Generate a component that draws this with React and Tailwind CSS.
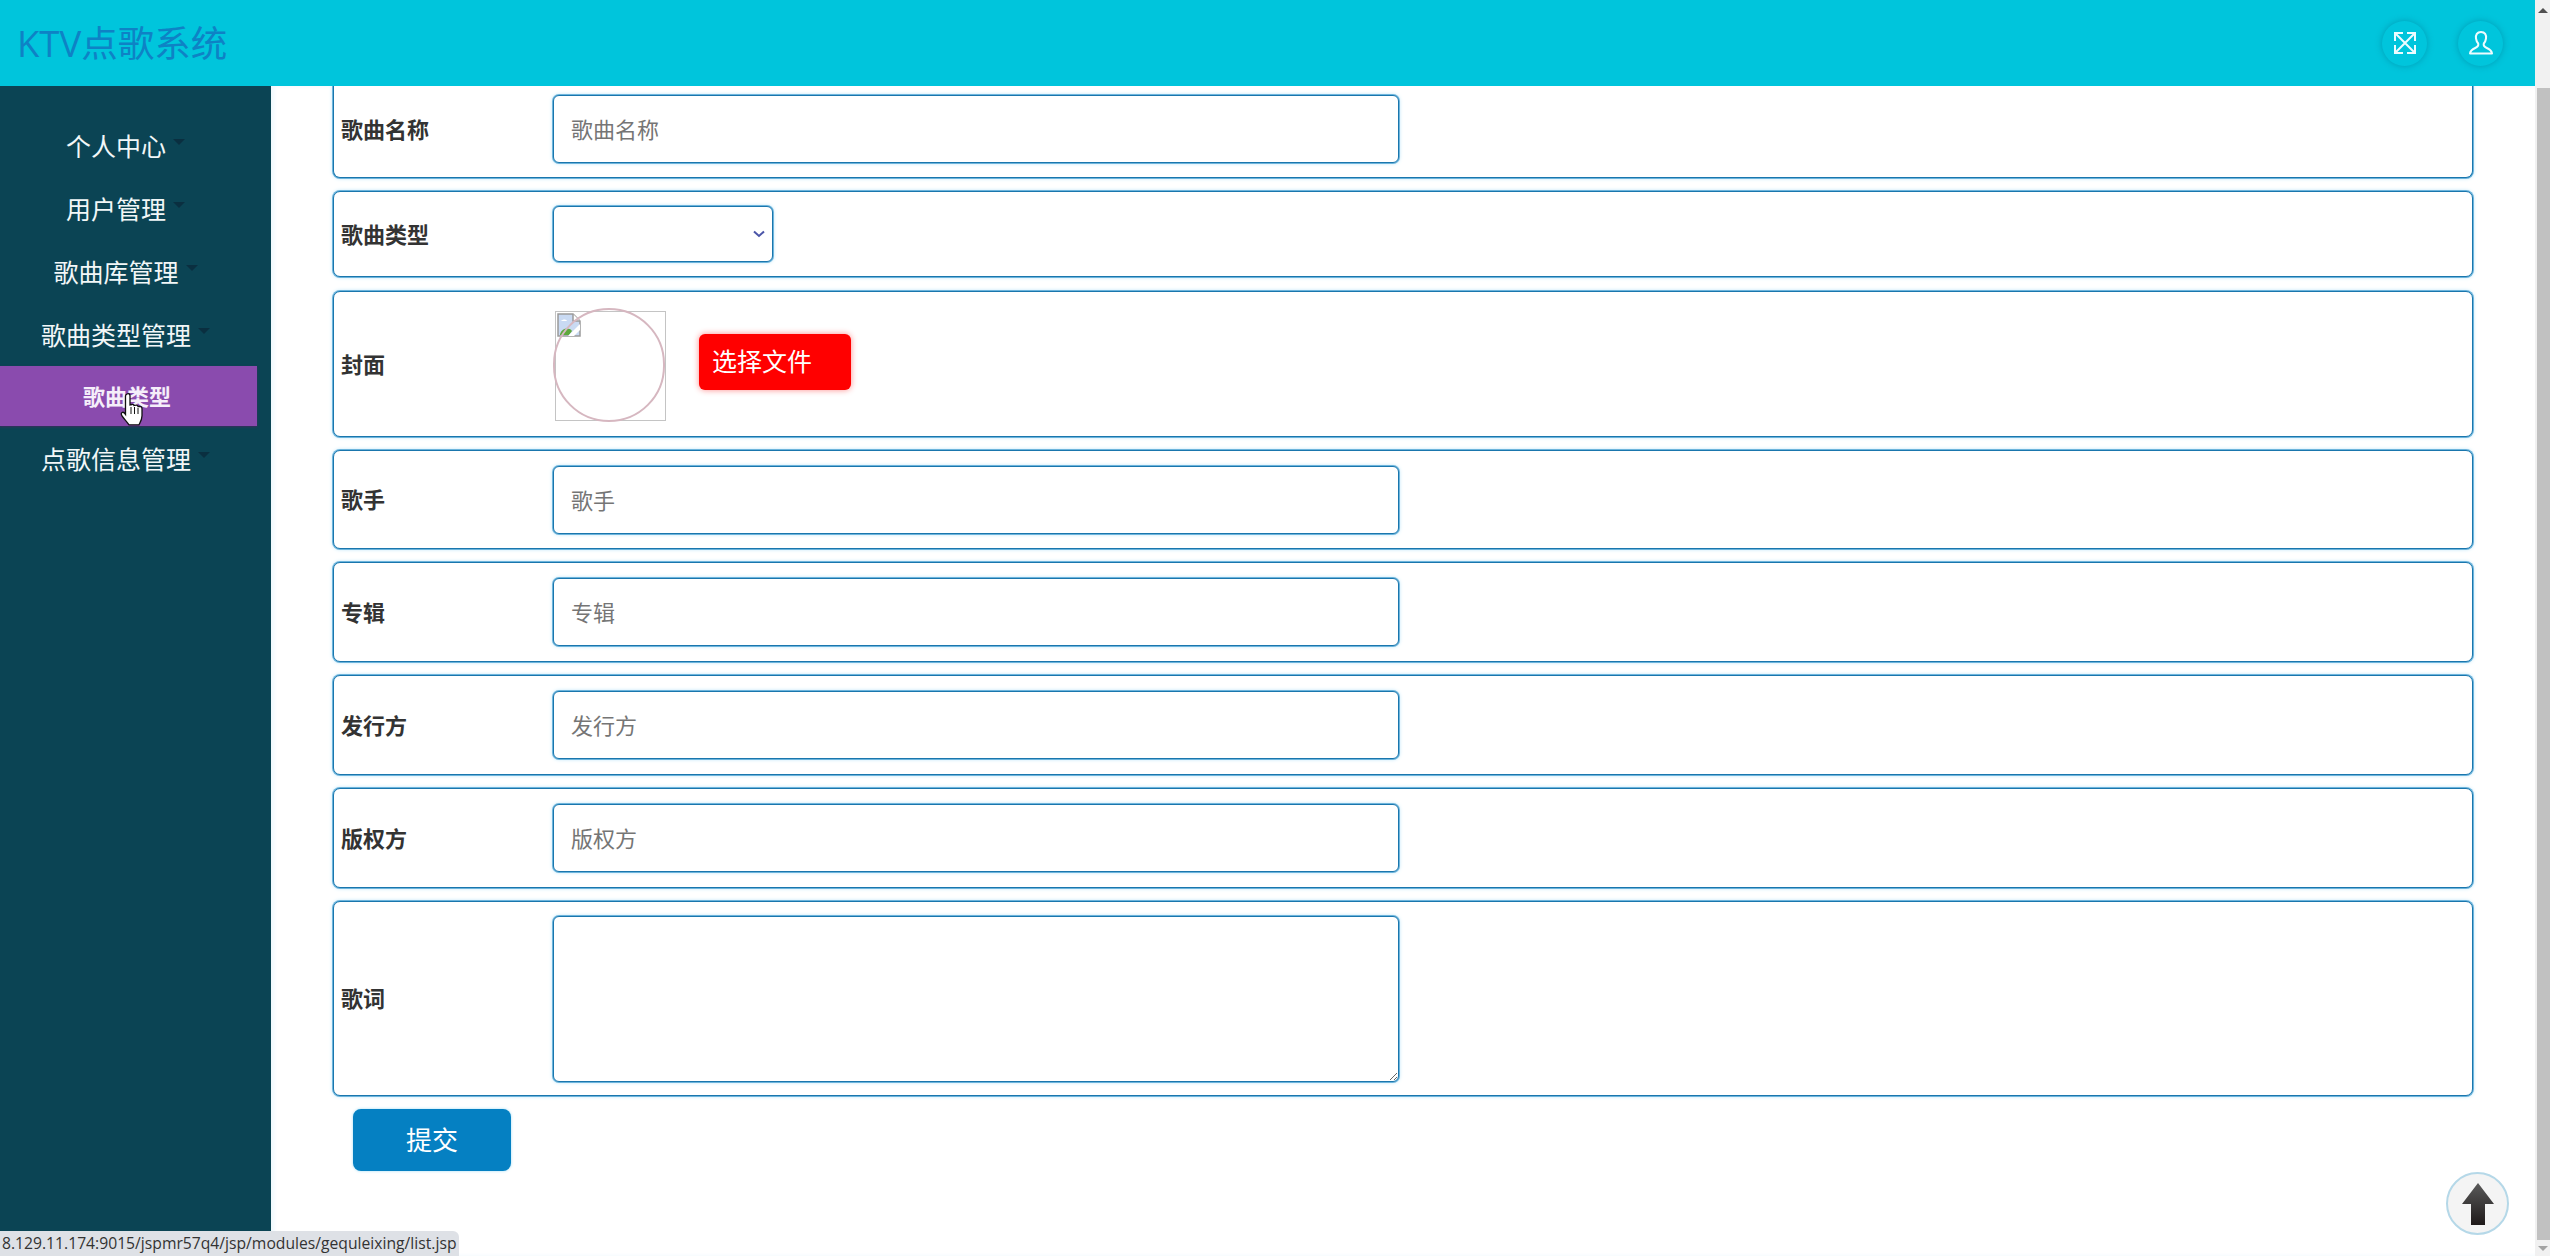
const font = "font-['Open_Sans','Noto_Sans_CJK_SC',sans-serif]"

const menu = ['个人中心', '用户管理', '歌曲库管理', '歌曲类型管理']

function MenuItem({ label }) {
  return (
    <div className="h-[63px] w-[251px] flex items-center justify-center text-[25px] text-[#f2f7f8]">
      <span>{label}</span>
      <span className="ml-[7px] mb-[9px] w-0 h-0 border-x-[6px] border-x-transparent border-t-[6px] border-t-[#0a2f40]" />
    </div>
  )
}

function Row({ label, className, children }) {
  return (
    <div className={`flex items-center pl-[7px] bg-white border border-[#1a76ad] rounded-[7px] shadow-[0_0_0_1px_#6db5dc,0_0_4px_#a8dcf5] ${className}`}>
      <div className="w-[212px] text-[22px] font-bold text-[#333]">{label}</div>
      {children}
    </div>
  )
}

function TextInput({ placeholder }) {
  return (
    <input
      placeholder={placeholder}
      className="w-[846px] h-[68px] px-[17px] text-[22px] bg-white border border-[#1a76ad] rounded-[6px] shadow-[0_0_0_1px_#6db5dc,0_0_4px_#a8dcf5] outline-none placeholder:text-[#757575]"
    />
  )
}

function BrokenImage() {
  return (
    <svg width="24" height="24" viewBox="0 0 24 24">
      <path d="M1 1h15l7 7v15H1z" fill="#c9daf3" stroke="#9a9a9a" strokeWidth="1.5" />
      <path d="M16 1v7h7" fill="#fff" stroke="#9a9a9a" strokeWidth="1.5" />
      <path d="M3 21c2-6 9-7 12-3l-3 4H3z" fill="#5fa83d" />
      <path d="M4 8c2-2 5-2 6 0z" fill="#fff" />
      <path d="M11 23 23 11v6l-6 6z" fill="#fff" />
    </svg>
  )
}

export default function App() {
  return (
    <div className={`relative flex h-[1256px] w-full overflow-hidden bg-white ${font}`}>
      <div className="flex-1 flex flex-col min-w-0">
        <header className="h-[86px] shrink-0 bg-[#00c5dc] flex items-center pl-[17px] pr-[32px] z-10">
          <div className="text-[36.5px] text-[#0e82c5] flex-1">KTV点歌系统</div>
          <div className="flex items-center gap-[31px]">
            <div className="w-[45px] h-[45px] rounded-full bg-[#00c5dc] shadow-[0_0_7px_#009db6] flex items-center justify-center">
              <svg width="24" height="24" viewBox="0 0 24 24" fill="none" stroke="#eefcff" strokeWidth="2">
                <path d="M3 3 21 21M21 3 3 21" />
                <path d="M2 9V2h7M15 2h7v7M22 15v7h-7M9 22H2v-7" strokeWidth="2" strokeLinecap="square" />
              </svg>
            </div>
            <div className="w-[45px] h-[45px] rounded-full bg-[#00c5dc] shadow-[0_0_7px_#009db6] flex items-center justify-center">
              <svg width="26" height="26" viewBox="0 0 26 26" fill="none" stroke="#eefcff" strokeWidth="2" strokeLinejoin="round">
                <path d="M13 2c-4 0-5.500 3-5 6.500.3 2.200 1.200 3.800 2.200 5 .6 2-.2 3.200-3 4.500-2.500 1.100-4.700 2.300-5.200 5.500h22c-.5-3.200-2.700-4.400-5.200-5.500-2.800-1.300-3.600-2.500-3-4.500 1-1.200 1.900-2.800 2.200-5C18.500 5 17 2 13 2z" />
              </svg>
            </div>
          </div>
        </header>

        <div className="flex-1 flex min-h-0">
          <aside className="w-[271px] shrink-0 bg-[#0b4454] pt-[29px]">
            {menu.map((m) => <MenuItem key={m} label={m} />)}
            <div className="-mt-[1px] h-[60px] w-[257px] bg-[#8a4bae] flex items-center justify-center pr-[3px] pt-[1px] text-[22px] font-bold text-[#f5eefa] shadow-[0_1px_2px_#3b2d5e]">
              歌曲类型
            </div>
            <div className="mt-[2px]"><MenuItem label="点歌信息管理" /></div>
          </aside>

          <main className="flex-1 pl-[62px] pr-[62px] flex flex-col gap-[13px] shadow-[inset_3px_0_4px_#eef8fd]">
            <Row label="歌曲名称" className="h-[92px] pb-[5px] !border-t-0 !rounded-t-none">
              <TextInput placeholder="歌曲名称" />
            </Row>
            <Row label="歌曲类型" className="h-[86px]">
              <div className="relative">
                <select className="w-[220px] h-[56px] appearance-none bg-white border border-[#1a76ad] rounded-[6px] shadow-[0_0_0_1px_#6db5dc,0_0_4px_#a8dcf5] outline-none" />
                <svg className="absolute right-[8px] top-[24px]" width="12" height="8" viewBox="0 0 12 8" fill="none" stroke="#4b55a8" strokeWidth="2">
                  <path d="M1 1.500 6 6l5-4.500" />
                </svg>
              </div>
            </Row>
            <Row label="封面" className="mt-[1px] h-[146px]">
              <div className="flex items-center">
                <div className="relative ml-[2px] mt-[4px] w-[111px] h-[110px] border border-[#c4c4c4]">
                  <div className="absolute left-[1px] top-[1px]"><BrokenImage /></div>
                  <div className="absolute -left-[3px] -top-[4px] w-[112px] h-[114px] rounded-full border-2 border-[#d6b7c0]" />
                </div>
                <div className="ml-[33px] mb-[4px] w-[152px] h-[56px] pl-[13px] flex items-center bg-[#ff0000] rounded-[6px] shadow-[0_0_6px_#ff8c8c] text-[25px] text-white">
                  选择文件
                </div>
              </div>
            </Row>
            <Row label="歌手" className="h-[99px]"><TextInput placeholder="歌手" /></Row>
            <Row label="专辑" className="h-[100px]"><TextInput placeholder="专辑" /></Row>
            <Row label="发行方" className="h-[100px]"><TextInput placeholder="发行方" /></Row>
            <Row label="版权方" className="h-[100px]"><TextInput placeholder="版权方" /></Row>
            <Row label="歌词" className="h-[195px]">
              <textarea className="block w-[846px] h-[166px] bg-white border border-[#1a76ad] rounded-[6px] shadow-[0_0_0_1px_#6db5dc,0_0_4px_#a8dcf5] outline-none" />
            </Row>
            <button className="ml-[20px] w-[158px] h-[62px] bg-[#0580c2] rounded-[8px] shadow-[0_0_3px_#9fdcf5] text-[26px] text-white">
              提交
            </button>
          </main>
        </div>
      </div>

      {/* window scrollbar */}
      <div className="w-[15px] shrink-0 bg-[#f1f1f1] flex flex-col items-end">
        <div className="w-full h-[88px] flex justify-center pt-[8px]">
          <span className="w-0 h-0 border-x-[5px] border-x-transparent border-b-[5px] border-b-[#505050]" />
        </div>
        <div className="w-[13px] h-[1152px] bg-[#c1c1c1]" />
        <div className="w-full flex-1 flex justify-center items-center">
          <span className="w-0 h-0 border-x-[5px] border-x-transparent border-t-[5px] border-t-[#a3a3a3]" />
        </div>
      </div>

      {/* back to top */}
      <div className="absolute left-[2446px] top-[1172px] w-[63px] h-[63px] rounded-full bg-[#f4f4f4] border-2 border-[#b5d8e8] flex items-center justify-center">
        <svg width="34" height="44" viewBox="0 0 34 44">
          <defs>
            <linearGradient id="up" x1="0" y1="0" x2="0" y2="1">
              <stop offset="0" stopColor="#5a5a5a" />
              <stop offset="1" stopColor="#1f1a1a" />
            </linearGradient>
          </defs>
          <path d="M17 1 33 22H24V43H10V22H1z" fill="url(#up)" />
        </svg>
      </div>

      {/* hand cursor */}
      <svg className="absolute left-[120px] top-[392px]" width="24" height="34" viewBox="0 0 24 34">
        <path d="M7 2c1.500-1 3 0 3 2v9l2-.5c1-.3 2 .3 2 1l2-.3c1-.2 2 .5 2 1.300l2-.2c1.500 0 2 1 2 2.500v7c0 4-2 7-3 9H9c-2-3-5-6-7-9-1-1.500-1-3 .5-3.500 1-.3 2 .5 3 2V4c0-1 .5-1.500 1.500-2z" fill="#fff" stroke="#111" strokeWidth="1.300" />
        <path d="M11 15v7M14.500 15v7M18 16v6" stroke="#111" strokeWidth="1" />
      </svg>

      {/* link status bubble */}
      <div className="absolute left-0 bottom-0 w-[459px] h-[25px] bg-[#dee1e6] rounded-tr-[6px] pl-[2px] text-[15.7px] leading-[25px] text-[#333] font-['Open_Sans',sans-serif] whitespace-nowrap overflow-hidden">
        8.129.11.174:9015/jspmr57q4/jsp/modules/gequleixing/list.jsp
      </div>
    </div>
  )
}
